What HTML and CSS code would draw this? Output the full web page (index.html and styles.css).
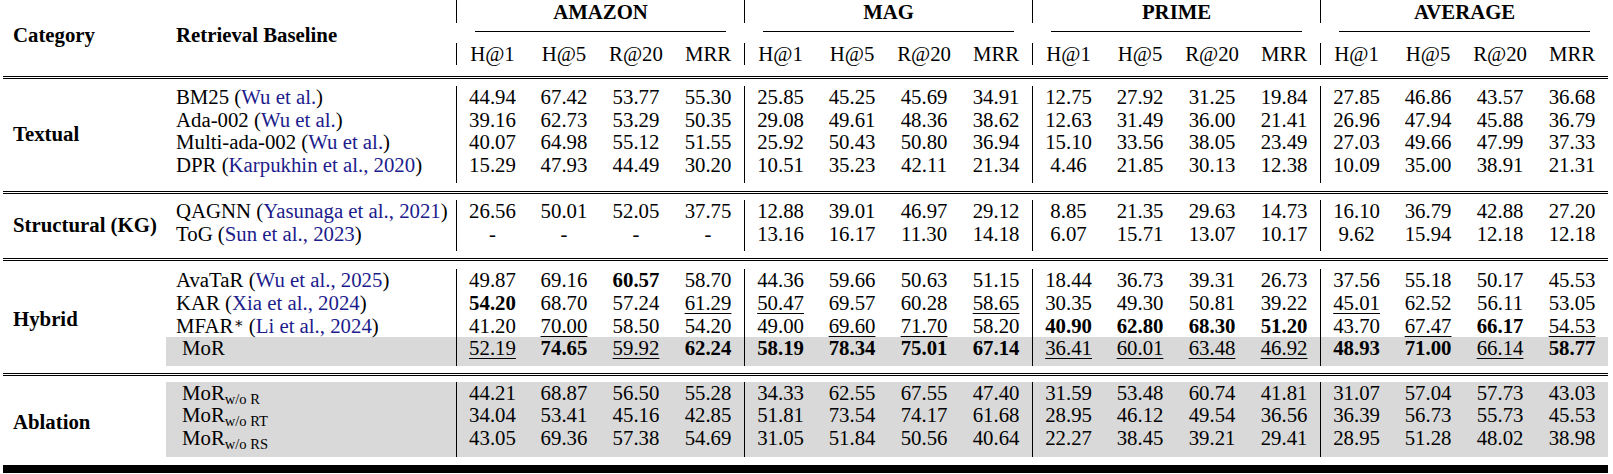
FILE: index.html
```html
<!DOCTYPE html>
<html lang="en">
<head>
  <meta charset="UTF-8">
  <title>Retrieval results</title>
  <link rel="stylesheet" href="styles.css">
</head>
<body>
  <table class="results">
    <colgroup>
      <col class="c-cat">
      <col class="c-base">
      <col class="c-num"><col class="c-num"><col class="c-num"><col class="c-num">
      <col class="c-num"><col class="c-num"><col class="c-num"><col class="c-num">
      <col class="c-num"><col class="c-num"><col class="c-num"><col class="c-num">
      <col class="c-num"><col class="c-num"><col class="c-num"><col class="c-num">
    </colgroup>
    <thead>
      <tr class="h1">
        <th class="cat head" rowspan="3">Category</th>
        <th class="base head" rowspan="3">Retrieval Baseline</th>
        <th class="grp g" colspan="4">AMAZON</th>
        <th class="grp g" colspan="4">MAG</th>
        <th class="grp g" colspan="4">PRIME</th>
        <th class="grp g" colspan="4">AVERAGE</th>
      </tr>
      <tr class="cmid">
        <td colspan="4"><div class="cmidrule"></div></td>
        <td colspan="4"><div class="cmidrule"></div></td>
        <td colspan="4"><div class="cmidrule"></div></td>
        <td colspan="4"><div class="cmidrule"></div></td>
      </tr>
      <tr class="h2">
        <th class="g">H@1</th><th>H@5</th><th>R@20</th><th>MRR</th>
        <th class="g">H@1</th><th>H@5</th><th>R@20</th><th>MRR</th>
        <th class="g">H@1</th><th>H@5</th><th>R@20</th><th>MRR</th>
        <th class="g">H@1</th><th>H@5</th><th>R@20</th><th>MRR</th>
      </tr>
      <tr class="gap"><td colspan="18"></td></tr>
    </thead>

    <tbody class="textual">
      <tr class="top"><td colspan="18"></td></tr>
      <tr>
        <th class="cat" rowspan="4">Textual</th>
        <td class="base">BM25 (<span class="cite">Wu et al.</span>)</td>
        <td class="g">44.94</td><td>67.42</td><td>53.77</td><td>55.30</td>
        <td class="g">25.85</td><td>45.25</td><td>45.69</td><td>34.91</td>
        <td class="g">12.75</td><td>27.92</td><td>31.25</td><td>19.84</td>
        <td class="g">27.85</td><td>46.86</td><td>43.57</td><td>36.68</td>
      </tr>
      <tr>
        <td class="base">Ada-002 (<span class="cite">Wu et al.</span>)</td>
        <td class="g">39.16</td><td>62.73</td><td>53.29</td><td>50.35</td>
        <td class="g">29.08</td><td>49.61</td><td>48.36</td><td>38.62</td>
        <td class="g">12.63</td><td>31.49</td><td>36.00</td><td>21.41</td>
        <td class="g">26.96</td><td>47.94</td><td>45.88</td><td>36.79</td>
      </tr>
      <tr>
        <td class="base">Multi-ada-002 (<span class="cite">Wu et al.</span>)</td>
        <td class="g">40.07</td><td>64.98</td><td>55.12</td><td>51.55</td>
        <td class="g">25.92</td><td>50.43</td><td>50.80</td><td>36.94</td>
        <td class="g">15.10</td><td>33.56</td><td>38.05</td><td>23.49</td>
        <td class="g">27.03</td><td>49.66</td><td>47.99</td><td>37.33</td>
      </tr>
      <tr class="last">
        <td class="base">DPR (<span class="cite">Karpukhin et al., 2020</span>)</td>
        <td class="g">15.29</td><td>47.93</td><td>44.49</td><td>30.20</td>
        <td class="g">10.51</td><td>35.23</td><td>42.11</td><td>21.34</td>
        <td class="g">4.46</td><td>21.85</td><td>30.13</td><td>12.38</td>
        <td class="g">10.09</td><td>35.00</td><td>38.91</td><td>21.31</td>
      </tr>
      <tr class="bottom"><td colspan="18"></td></tr>
    </tbody>

    <tbody class="structural">
      <tr class="top"><td colspan="18"></td></tr>
      <tr>
        <th class="cat" rowspan="2">Structural (KG)</th>
        <td class="base">QAGNN (<span class="cite">Yasunaga et al., 2021</span>)</td>
        <td class="g">26.56</td><td>50.01</td><td>52.05</td><td>37.75</td>
        <td class="g">12.88</td><td>39.01</td><td>46.97</td><td>29.12</td>
        <td class="g">8.85</td><td>21.35</td><td>29.63</td><td>14.73</td>
        <td class="g">16.10</td><td>36.79</td><td>42.88</td><td>27.20</td>
      </tr>
      <tr class="last">
        <td class="base">ToG (<span class="cite">Sun et al., 2023</span>)</td>
        <td class="g">-</td><td>-</td><td>-</td><td>-</td>
        <td class="g">13.16</td><td>16.17</td><td>11.30</td><td>14.18</td>
        <td class="g">6.07</td><td>15.71</td><td>13.07</td><td>10.17</td>
        <td class="g">9.62</td><td>15.94</td><td>12.18</td><td>12.18</td>
      </tr>
      <tr class="bottom"><td colspan="18"></td></tr>
    </tbody>

    <tbody class="hybrid">
      <tr class="top"><td colspan="18"></td></tr>
      <tr>
        <th class="cat" rowspan="4">Hybrid</th>
        <td class="base">AvaTaR (<span class="cite">Wu et al., 2025</span>)</td>
        <td class="g">49.87</td><td>69.16</td><td class="b">60.57</td><td>58.70</td>
        <td class="g">44.36</td><td>59.66</td><td>50.63</td><td>51.15</td>
        <td class="g">18.44</td><td>36.73</td><td>39.31</td><td>26.73</td>
        <td class="g">37.56</td><td>55.18</td><td>50.17</td><td>45.53</td>
      </tr>
      <tr>
        <td class="base">KAR (<span class="cite">Xia et al., 2024</span>)</td>
        <td class="g b">54.20</td><td>68.70</td><td>57.24</td><td><span class="u">61.29</span></td>
        <td class="g"><span class="u">50.47</span></td><td>69.57</td><td>60.28</td><td><span class="u">58.65</span></td>
        <td class="g">30.35</td><td>49.30</td><td>50.81</td><td>39.22</td>
        <td class="g"><span class="u">45.01</span></td><td>62.52</td><td>56.11</td><td>53.05</td>
      </tr>
      <tr>
        <td class="base">MFAR<sup>∗</sup> (<span class="cite">Li et al., 2024</span>)</td>
        <td class="g">41.20</td><td><span class="u">70.00</span></td><td>58.50</td><td>54.20</td>
        <td class="g">49.00</td><td><span class="u">69.60</span></td><td><span class="u">71.70</span></td><td>58.20</td>
        <td class="g b">40.90</td><td class="b">62.80</td><td class="b">68.30</td><td class="b">51.20</td>
        <td class="g">43.70</td><td><span class="u">67.47</span></td><td class="b">66.17</td><td><span class="u">54.53</span></td>
      </tr>
      <tr class="last ours">
        <td class="base">MoR</td>
        <td class="g"><span class="u">52.19</span></td><td class="b">74.65</td><td><span class="u">59.92</span></td><td class="b">62.24</td>
        <td class="g b">58.19</td><td class="b">78.34</td><td class="b">75.01</td><td class="b">67.14</td>
        <td class="g"><span class="u">36.41</span></td><td><span class="u">60.01</span></td><td><span class="u">63.48</span></td><td><span class="u">46.92</span></td>
        <td class="g b">48.93</td><td class="b">71.00</td><td><span class="u">66.14</span></td><td class="b">58.77</td>
      </tr>
      <tr class="bottom"><td colspan="18"></td></tr>
    </tbody>

    <tbody class="ablation">
      <tr class="top"><td colspan="18"></td></tr>
      <tr class="ours">
        <th class="cat" rowspan="3">Ablation</th>
        <td class="base">MoR<sub>w/o R</sub></td>
        <td class="g">44.21</td><td>68.87</td><td>56.50</td><td>55.28</td>
        <td class="g">34.33</td><td>62.55</td><td>67.55</td><td>47.40</td>
        <td class="g">31.59</td><td>53.48</td><td>60.74</td><td>41.81</td>
        <td class="g">31.07</td><td>57.04</td><td>57.73</td><td>43.03</td>
      </tr>
      <tr class="ours">
        <td class="base">MoR<sub>w/o RT</sub></td>
        <td class="g">34.04</td><td>53.41</td><td>45.16</td><td>42.85</td>
        <td class="g">51.81</td><td>73.54</td><td>74.17</td><td>61.68</td>
        <td class="g">28.95</td><td>46.12</td><td>49.54</td><td>36.56</td>
        <td class="g">36.39</td><td>56.73</td><td>55.73</td><td>45.53</td>
      </tr>
      <tr class="last ours">
        <td class="base">MoR<sub>w/o RS</sub></td>
        <td class="g">43.05</td><td>69.36</td><td>57.38</td><td>54.69</td>
        <td class="g">31.05</td><td>51.84</td><td>50.56</td><td>40.64</td>
        <td class="g">22.27</td><td>38.45</td><td>39.21</td><td>29.41</td>
        <td class="g">28.95</td><td>51.28</td><td>48.02</td><td>38.98</td>
      </tr>
      <tr class="bottom"><td colspan="18"></td></tr>
    </tbody>

    <tbody>
      <tr class="endrule"><td colspan="18"></td></tr>
    </tbody>
  </table>
</body>
</html>
```

FILE: styles.css
```css
* {
  margin: 0;
  padding: 0;
  box-sizing: border-box;
}

body {
  background: #fff;
  color: #000;
  font-family: "Liberation Serif", "Times New Roman", "DejaVu Serif", serif;
  font-size: 20.8px;
  overflow: hidden;
}

.results {
  margin-left: 3px;
  width: 1605px;
  table-layout: fixed;
  border-collapse: separate;
  border-spacing: 0;
}

.c-cat { width: 163px; }
.c-base { width: 290px; }
.c-num { width: 72px; }

.results th,
.results td {
  padding: 0;
  line-height: 22.7px;
  text-align: center;
  white-space: nowrap;
  font-weight: normal;
  vertical-align: middle;
}

/* group separators */
.results .g {
  border-left: 1px solid #000;
}

/* header */
.results .head {
  font-weight: bold;
  padding-top: 3px;
}

.results .cat {
  text-align: left;
  padding-left: 10px;
  font-weight: bold;
}

.results .base {
  text-align: left;
  padding-left: 10px;
}

.h1 th {
  height: 23px;
  line-height: 23px;
}

.results .grp {
  font-weight: bold;
}

.cmid td {
  height: 20px;
  line-height: 0;
  vertical-align: top;
}

.cmidrule {
  margin: 8px 18px 0 19px;
  border-top: 1px solid #000;
}

.h2 th {
  height: 22px;
  line-height: 22px;
}

.gap td {
  height: 11px;
  line-height: 0;
  font-size: 0;
}

/* rules between blocks */
.top td {
  border-top: 3px double #000;
  line-height: 0;
  font-size: 0;
}

.bottom td {
  line-height: 0;
  font-size: 0;
}

.textual .top td { padding-top: 7px; }
.textual .last td { padding-bottom: 6px; }
.textual .bottom td { padding-top: 8px; }

.structural .top td { padding-top: 6.6px; }
.structural .last td { padding-bottom: 5px; }
.structural .bottom td { padding-top: 7px; }

.hybrid .top td { padding-top: 8.5px; }
.hybrid .last td { padding-bottom: 6px; }
.hybrid .bottom td { padding-top: 7px; }
.results .hybrid .cat { padding-top: 4px; }

.ablation .top td { padding-top: 5.5px; }
.ablation .last td { padding-bottom: 7px; }
.ablation .bottom td { padding-top: 8.3px; }
.results .ablation .cat { padding-top: 7px; }

.endrule td {
  border-top: 8px solid #000;
  line-height: 0;
  font-size: 0;
}

/* our method rows */
.ours td {
  background: #d9d9d9;
}

.results .ours .base {
  padding-left: 16px;
}

.cite {
  color: #1c1c8c;
}

.results .b {
  font-weight: bold;
}

.u {
  text-decoration: underline;
  text-decoration-thickness: 1px;
  text-underline-offset: 3px;
}

sub {
  font-size: 0.7em;
  line-height: 0;
  vertical-align: -0.28em;
}

sup {
  font-size: 0.72em;
  line-height: 0;
  vertical-align: 0.35em;
}
```
